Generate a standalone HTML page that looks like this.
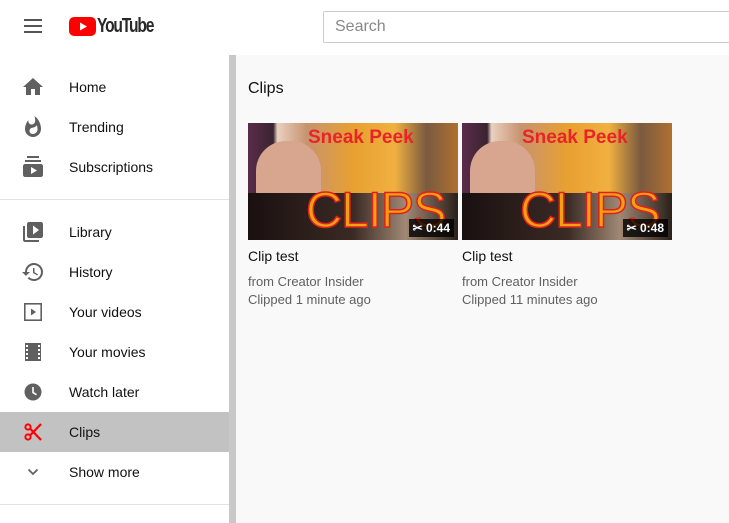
<!DOCTYPE html>
<html><head><style>
*{margin:0;padding:0;box-sizing:border-box}
body{width:729px;height:523px;overflow:hidden;background:#fff;font-family:"Liberation Sans",Arial,sans-serif;position:relative}
.hdr{position:absolute;left:0;top:0;width:729px;height:55px;background:#fff}
.search{position:absolute;left:323px;top:11px;width:420px;height:32px;border:1px solid #ccc;border-radius:2px;font-size:16px;color:#888;padding:6px 11px}
.side{position:absolute;left:0;top:55px;width:229px;height:468px;background:#fff}
.sb{position:absolute;left:229px;top:55px;width:7px;height:468px;background:#c8c8c8}
.main{position:absolute;left:236px;top:55px;width:493px;height:468px;background:#f9f9f9}
.item{position:absolute;left:0;width:229px;height:40px;font-size:14px;color:#111}
.item span{position:absolute;left:69px;top:12px}
.item svg{position:absolute;left:21px;top:8px}
.div{position:absolute;left:0;width:229px;height:1px;background:#e2e2e2}
.thumb{position:absolute;top:123px;width:210px;height:117px;overflow:hidden;background:linear-gradient(90deg,#5a2c4a 0%,#3a2430 12%,#e8d0c0 14%,#c8936e 28%,#e8a030 50%,#f0b040 70%,#7a5a40 85%,#b07030 100%)}
.t{position:absolute;font-size:14px;color:#111}
.m{position:absolute;font-size:13px;color:#606060}
</style></head><body>
<div class="hdr">
<svg style="position:absolute;left:24px;top:19px" width="18" height="14"><rect y="0" width="18" height="2" fill="#555"/><rect y="6" width="18" height="2" fill="#555"/><rect y="12" width="18" height="2" fill="#555"/></svg>
<svg style="position:absolute;left:69px;top:17px" width="27" height="19"><rect width="27" height="19" rx="5" fill="#f00"/><path d="M11 5.5L18 9.5L11 13.5Z" fill="#fff"/></svg>
<div style="position:absolute;left:97px;top:15px;font-size:20px;font-weight:bold;letter-spacing:-1.5px;color:#282828;transform:scaleX(0.78);transform-origin:left">YouTube</div>
<div class="search">Search</div>
</div>
<div class="side">
<div class="item" style="top:12px"><svg width="24" height="24"><path d="M10 20v-6h4v6h5v-8h3L12 3 2 12h3v8z" fill="#606060"/></svg><span>Home</span></div>
<div class="item" style="top:52px"><svg width="24" height="24"><path d="M13.5 1s.7 2.6.7 4.8c0 2-1.3 3.7-3.4 3.7S7.3 7.8 7.3 5.7L7.4 5C5.3 7.5 4 10.7 4 14a8 8 0 0016 0c0-5.4-2.6-10.2-6.5-13zM11.7 19c-1.8 0-3.2-1.4-3.2-3.1 0-1.6 1-2.8 2.8-3.1 1.8-.4 3.6-1.2 4.6-2.6.4 1.3.6 2.7.6 4.1 0 2.6-2.1 4.7-4.8 4.7z" fill="#606060"/></svg><span>Trending</span></div>
<div class="item" style="top:92px"><svg width="24" height="24"><path d="M18 1H6v2h12zM20 5H4v2h16zM4 9h16c1 0 2 1 2 2v9c0 1-1 2-2 2H4c-1 0-2-1-2-2v-9c0-1 1-2 2-2zm6 3v7l6-3.5z" fill="#606060"/></svg><span>Subscriptions</span></div>
<div class="div" style="top:144px"></div>
<div class="item" style="top:157px"><svg width="24" height="24"><path d="M4 6H2v14c0 1.1.9 2 2 2h14v-2H4V6zm16-4H8c-1.1 0-2 .9-2 2v12c0 1.1.9 2 2 2h12c1.1 0 2-.9 2-2V4c0-1.1-.9-2-2-2zm-8 12.5v-9l6 4.5-6 4.5z" fill="#606060"/></svg><span>Library</span></div>
<div class="item" style="top:197px"><svg width="24" height="24"><path d="M13 3a9 9 0 00-9 9H1l3.9 3.9L9 12H6a7 7 0 112.050 4.95l-1.42 1.42A9 9 0 1013 3zm-1 5v5l4.28 2.54.72-1.21-3.5-2.08V8H12z" fill="#606060"/></svg><span>History</span></div>
<div class="item" style="top:237px"><svg width="24" height="24"><rect x="3.8" y="3.8" width="16.4" height="16.4" fill="none" stroke="#606060" stroke-width="1.6"/><path d="M10 8.5v7l5-3.5z" fill="#606060"/></svg><span>Your videos</span></div>
<div class="item" style="top:277px"><svg width="24" height="24"><path d="M4 3h16v18H4z" fill="#606060"/><g fill="#fff"><rect x="5" y="5" width="2" height="2"/><rect x="5" y="9" width="2" height="2"/><rect x="5" y="13" width="2" height="2"/><rect x="5" y="17" width="2" height="2"/><rect x="17" y="5" width="2" height="2"/><rect x="17" y="9" width="2" height="2"/><rect x="17" y="13" width="2" height="2"/><rect x="17" y="17" width="2" height="2"/></g></svg><span>Your movies</span></div>
<div class="item" style="top:317px"><svg width="24" height="24"><circle cx="12" cy="12" r="8.5" fill="#606060"/><path d="M12 7v5.5l3.5 2.2" stroke="#fff" stroke-width="1.6" fill="none"/></svg><span>Watch later</span></div>
<div class="item" style="top:357px;background:#c2c2c2"><svg width="24" height="24"><circle cx="7" cy="7" r="2.6" fill="none" stroke="#f00" stroke-width="2"/><circle cx="7" cy="17" r="2.6" fill="none" stroke="#f00" stroke-width="2"/><path d="M9 8.5L20 20M9 15.5L20 4" stroke="#f00" stroke-width="2.2"/></svg><span>Clips</span></div>
<div class="item" style="top:397px"><svg width="24" height="24"><path d="M7.5 9.5l4.5 4.5 4.5-4.5" stroke="#606060" stroke-width="1.8" fill="none"/></svg><span>Show more</span></div>
<div class="div" style="top:449px"></div>
</div>
<div class="sb"></div>
<div class="main">
<div class="t" style="left:12px;top:25px;font-size:16px">Clips</div>
</div>
<div class="thumb" style="left:248px"><div style="position:absolute;left:60px;top:4px;font-size:19px;color:#e8242a;font-weight:bold">Sneak Peek</div><div style="position:absolute;left:8px;top:18px;width:65px;height:80px;border-radius:30px;background:#d8a58e"></div><div style="position:absolute;left:0;top:70px;width:210px;height:47px;background:linear-gradient(90deg,#1a1010,#3a2a24 50%,#a08874 75%,#2a201a)"></div><div style="position:absolute;left:58px;top:58px;font-size:50px;color:#f2a010;-webkit-text-stroke:1.5px #e02020;letter-spacing:-1px">CLIPS</div><div style="position:absolute;right:4px;bottom:3px;background:rgba(0,0,0,.8);color:#fff;font-size:12px;font-weight:bold;padding:2px 4px">✂ 0:44</div></div>
<div class="thumb" style="left:462px"><div style="position:absolute;left:60px;top:4px;font-size:19px;color:#e8242a;font-weight:bold">Sneak Peek</div><div style="position:absolute;left:8px;top:18px;width:65px;height:80px;border-radius:30px;background:#d8a58e"></div><div style="position:absolute;left:0;top:70px;width:210px;height:47px;background:linear-gradient(90deg,#1a1010,#3a2a24 50%,#a08874 75%,#2a201a)"></div><div style="position:absolute;left:58px;top:58px;font-size:50px;color:#f2a010;-webkit-text-stroke:1.5px #e02020;letter-spacing:-1px">CLIPS</div><div style="position:absolute;right:4px;bottom:3px;background:rgba(0,0,0,.8);color:#fff;font-size:12px;font-weight:bold;padding:2px 4px">✂ 0:48</div></div>
<div class="t" style="left:248px;top:248px">Clip test</div>
<div class="m" style="left:248px;top:274px">from Creator Insider</div>
<div class="m" style="left:248px;top:292px">Clipped 1 minute ago</div>
<div class="t" style="left:462px;top:248px">Clip test</div>
<div class="m" style="left:462px;top:274px">from Creator Insider</div>
<div class="m" style="left:462px;top:292px">Clipped 11 minutes ago</div>
</body></html>
